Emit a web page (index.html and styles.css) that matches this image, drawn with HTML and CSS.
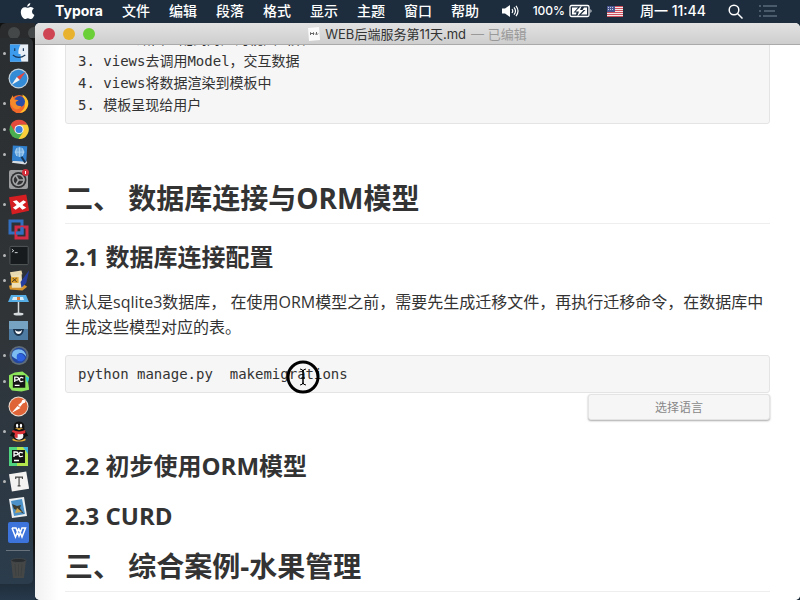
FILE: index.html
```
<!DOCTYPE html>
<html lang="zh-CN">
<head>
    <meta charset="UTF-8">
    <meta name="viewport" content="width=device-width, initial-scale=1.0">
    <title>WEB后端服务第11天.md</title>
    <link rel="stylesheet" href="styles.css">
</head>
<body>
    <header class="menubar">
        <svg class="apple" width="15" height="17" viewBox="0 0 15 17"><path fill="#fff" d="M10.3 0c.2 1.700-1.200 3.600-3.100 3.700C7 2 8.600.2 10.300 0zM7.600 4.800c.7 0 1.700-.9 3.200-.8 1.300.1 2.300.6 3 1.500-2.600 1.700-2.200 5.200.6 6.400-.6 1.700-2 4.100-3.500 4.100-1.200 0-1.600-.8-3-.8s-1.900.8-3 .8C3 16 .8 12.400.8 9.100.8 5.900 2.800 4.200 4.800 4.200c1.300 0 2.200.6 2.800.6z"/></svg>
        <nav class="menus">
            <button class="app-name">Typora</button>
            <button>文件</button>
            <button>编辑</button>
            <button>段落</button>
            <button>格式</button>
            <button>显示</button>
            <button>主题</button>
            <button>窗口</button>
            <button>帮助</button>
        </nav>
        <div class="status">
            <svg class="volume" width="18" height="14" viewBox="0 0 18 14"><path fill="#fff" d="M1 4.500h3L9 1v12L4 9.500H1z"/><path fill="none" stroke="#fff" stroke-width="1.200" d="M11 5q1.500 2 0 4M13 3.300q3 3.700 0 7.400M15 1.800q4 5.200 0 10.400"/></svg>
            <span class="percent">100%</span>
            <svg class="battery" width="24" height="14" viewBox="0 0 24 14"><rect x="1" y="1.500" width="19" height="11" rx="1.500" fill="none" stroke="#fff" stroke-width="1.300"/><path fill="#fff" d="M3 3.500h6L4.500 8.500h3L7 10.500H3zM15 3.500h3v7h-6L16.500 6h-3zM13 1L6.500 7.500H10L8 13l6.500-7H11zM21.500 5q2 2 0 4z"/></svg>
            <svg class="flag" width="16" height="11" viewBox="0 0 16 11"><path fill="#f3e9e9" d="M0 0h16v11H0z"/><path stroke="#cf4f5e" d="M0 .5h16M0 2.500h16M0 4.500h16M0 6.500h16M0 8.500h16M0 10.500h16"/><path fill="#4a568f" d="M0 0h8v6H0z"/><path stroke="#c8cce0" stroke-dasharray="1 1" d="M1 1.500h6M1 3.500h6"/></svg>
            <span class="clock">周一 11:44</span>
            <svg class="search" width="15" height="15" viewBox="0 0 15 15" fill="none" stroke="#fff" stroke-width="1.500"><circle cx="6" cy="6" r="4.800"/><path d="M9.500 9.500l5 5"/></svg>
            <svg class="list" width="19" height="12" viewBox="0 0 19 12" stroke="#596b7c" stroke-width="1.500"><path d="M0 1h2M4 1h14M0 6h2M5 6h11M0 11h2M4 11h14"/></svg>
        </div>
    </header>

    <div class="desktop">
        <aside class="side">
            <div class="back-window"><i></i><i></i></div>
            <div class="dock">
                <ul class="dock-apps">
                    <li class="running"><svg viewBox="0 0 21 21"><path fill="#e7eef5" d="M1 1h19v18H1z"/><path fill="#3d9bee" d="M1 1h11q-3 6-2 10h2q0 4 1 8H1z"/><path fill="none" stroke="#17385c" stroke-width="1.200" d="M6 5v3M15 5v3M4 12q6 5 13 0"/></svg></li>
                    <li><svg viewBox="0 0 21 21"><circle cx="10.500" cy="10.500" r="10" fill="#c4d2dc"/><circle cx="10.500" cy="10.500" r="8.800" fill="#348bd6"/><path fill="#e5453d" d="M17.500 4l-5.700 8-3-3z"/><path fill="#f3f3f3" d="M3.500 17l5.300-8 3 3z"/></svg></li>
                    <li class="running"><svg viewBox="0 0 21 21"><circle cx="10.500" cy="11" r="9.500" fill="#f1682a"/><path fill="#ffc12b" d="M14 1q7 4 6 11-2 8-9 8 7-4 5-10z"/><circle cx="11" cy="8.500" r="5.700" fill="#2b4fa9"/><path fill="#f58a2b" d="M1 7l3-5 1 4 5 1-3 2q0 5 6 4-3 5-7 3Q1 13 1 7z"/></svg></li>
                    <li class="running"><svg viewBox="0 0 21 21"><circle cx="10.500" cy="10.500" r="10" fill="#4aae50"/><path fill="#e24a3c" d="M1.800 5.500a10 10 0 0 1 17.400 0h-8.700L6.200 13z"/><path fill="#fbcf3b" d="M10.500 5.500h8.700a10 10 0 0 1-9.200 15l4.800-7.500z"/><circle cx="10.500" cy="10.500" r="4.800" fill="#f4f4f4"/><circle cx="10.500" cy="10.500" r="3.700" fill="#397fe0"/></svg></li>
                    <li class="running"><svg viewBox="0 0 21 21"><path fill="#d7dde3" d="M3 19l14 2 2-2-1-2H4z"/><path fill="#3181ce" d="M4 1l15 1-1 16-15-1z"/><circle cx="11" cy="8" r="5" fill="#75afe0"/><path fill="none" stroke="#b4d8f5" stroke-width=".8" d="M6 8h10M11 3v10M8 4q-2 4 0 8M14 4q2 4 0 8"/><path stroke="#193452" stroke-width="2" d="M13 13l4 6"/></svg></li>
                    <li><svg viewBox="0 0 21 21"><rect x="1" y="1" width="19" height="19" rx="2" fill="#9c9e9f"/><circle cx="10.500" cy="11" r="8" fill="#303234"/><circle cx="10.500" cy="11" r="5.500" fill="none" stroke="#a4a6a7" stroke-width="1.500"/><path stroke="#a4a6a7" stroke-width="1.500" d="M10.500 11l-3-5M10.500 11h6M10.500 11l-3 5"/><circle cx="17.500" cy="3.500" r="3.500" fill="#d3303d"/><path stroke="#fff" d="M17.500 2v3"/></svg></li>
                    <li class="running"><svg viewBox="0 0 21 21"><path fill="#d51e22" d="M0 3l18-3 3 17-18 4z"/><path fill="#fff" d="M4 7l4-1 3 3 4-3 3 2-4 3 4 3-4 2-3-3-4 3-3-2 4-3z"/></svg></li>
                    <li><svg viewBox="0 0 21 21" fill="none" stroke-width="3"><path stroke="#326fc0" d="M2 2h12v12H2z"/><path stroke="#d22b46" d="M8 8h11v11H8z"/><path stroke="#326fc0" d="M8 14h6V8"/></svg></li>
                    <li class="running"><svg viewBox="0 0 21 21"><rect x="1" y="1" width="19" height="19" rx="1" fill="#171b1e" stroke="#55595b"/><path fill="none" stroke="#ddd" d="M3 4l2 1.500L3 7M6 7.500h3"/></svg></li>
                    <li class="running"><svg viewBox="0 0 21 21"><path fill="#d4932e" d="M0 16l13-3 6 4-5 4-13-1z"/><path fill="#eee1b9" d="M2 3l11-1 1 16H3z"/><path fill="#e8d9b0" d="M1 2l12-2 1 4-12 2z"/><path fill="#e0a22b" d="M2 7h8v6H2z"/><path fill="none" stroke="#4b3722" d="M3 12l5-4M4 8l4 4"/><path fill="#263f9e" d="M21 0l-3 13-5 5-1-6z"/></svg></li>
                    <li><svg viewBox="0 0 21 21"><path fill="#57aee4" d="M3 0h15l3 7H0z"/><path fill="#d8edf7" d="M5 2h10l1 3H4z"/><path fill="#df7d37" d="M9 2h3v3H9z"/><path stroke="#d6dbde" stroke-width="1.500" d="M10.500 7v12"/><ellipse cx="10.500" cy="19" rx="5" ry="1.500" fill="#d6dbde"/></svg></li>
                    <li><svg viewBox="0 0 21 21"><path fill="#4d7ba2" d="M1 1h19v19H1z"/><path fill="#77a3c3" d="M1 1h19v8H1z"/><path fill="#1d344d" d="M5 9h11q-1 7-5.500 7T5 9z"/><path fill="#fff" d="M7 10q3.500 3 7 0-.5 4-3.500 4T7 10z"/></svg></li>
                    <li class="running"><svg viewBox="0 0 21 21"><circle cx="10.500" cy="10.500" r="10" fill="#5e6c79"/><circle cx="10.500" cy="10.500" r="8" fill="#24479f"/><path fill="#7cbcf0" d="M3 11q0-7 7-7 7 0 8 8-3-5-7-4-4 2-2 7-4-2-6-4z"/><path fill="#2c62e0" d="M9 9q5-2 8 4-3 5-8 3-2-4 0-7z"/></svg></li>
                    <li class="running"><svg viewBox="0 0 21 21"><path fill="#8ee65c" d="M0 4l6-3 8-1 4 3 3 3-1 5 1 8-8 2-10-1L0 16z"/><path fill="#29c6dc" d="M17 5l4 2-2 5z"/><path fill="#151515" d="M4 4h13v13H4z"/><g fill="none" stroke="#fff" stroke-width="1.300"><path d="M6 11V6h2q2 0 2 1.500T8 9H6M15 7q-4-2-4 1.500t4 1.500M6 14.500h5"/></g></svg></li>
                    <li><svg viewBox="0 0 21 21"><circle cx="10.500" cy="10.500" r="10" fill="#e9dcd2"/><circle cx="10.500" cy="10.500" r="9" fill="#df6437"/><path fill="#fff" d="M3.500 17l6-7 3 2zM10 9l5-4 1 1-4 5z"/><circle cx="15.500" cy="5.500" r="1.800" fill="#fff"/></svg></li>
                    <li class="running"><svg viewBox="0 0 21 21"><ellipse cx="10.500" cy="19" rx="7" ry="2" fill="#e5ad35"/><path fill="#111" d="M5 8Q4 0 10.500 0T16 8l4 7-3 1q-1 4-6.500 4T4 16l-3-1z"/><ellipse cx="10.500" cy="15" rx="4.500" ry="4" fill="#f4f4f4"/><ellipse cx="8.500" cy="4.500" rx="1.200" ry="2" fill="#fff"/><ellipse cx="12.500" cy="4.500" rx="1.200" ry="2" fill="#fff"/><path fill="#efb236" d="M6 7h9l-4.500 2z"/><path fill="#dc3238" d="M4 9q6.500 3 13 0v3q-4 2-8 1v4H6v-5l-3-1z"/></svg></li>
                    <li><svg viewBox="0 0 21 21"><path fill="#b4e54d" d="M1 1h19v19H1z"/><path fill="#50d480" d="M1 1h8v19H1z"/><path fill="#3cb5df" d="M15 1h5v7z"/><path fill="#151515" d="M4 4h13v13H4z"/><g fill="none" stroke="#fff" stroke-width="1.300"><path d="M6 11V6h2q2 0 2 1.500T8 9H6M15 7q-4-2-4 1.500t4 1.500M6 14.500h5"/></g></svg></li>
                    <li class="running"><svg viewBox="0 0 21 21"><path fill="#f4f3f1" d="M0 3l18-3 3 18-18 3z"/><path fill="none" stroke="#444" stroke-width="1.200" d="M7 8V6h7v2M10.500 6v9M9 15h3"/></svg></li>
                    <li><svg viewBox="0 0 21 21"><path fill="#edf0f1" d="M1 2l15-2 3 19-15 2z"/><path fill="#4c92c8" d="M3 4l11-2 3 15-11 2z"/><path fill="#3b3c32" d="M4 7l5 2 4-1-1 3 4 6-5-3-5-2z"/><path fill="#c8a450" d="M9 11l5 4-7 1z"/></svg></li>
                    <li><svg viewBox="0 0 21 21"><rect x="0" y="0" width="21" height="21" rx="2" fill="#3c74dc"/><path fill="none" stroke="#fff" stroke-width="1.500" d="M4 6h4l3 8 3-8h3.500l-3.500 9-3.500-9M4 6l3.500 9L11 6"/></svg></li>
                </ul>
                <hr>
                <svg class="trash" width="17" height="21" viewBox="0 0 17 21"><path fill="#454747" d="M1 2h15l-2 18H3z"/><ellipse cx="8.500" cy="2.500" rx="7.500" ry="2" fill="#292d2f" stroke="#4c5051" stroke-width=".6"/><path stroke="#3c4040" d="M5 6l1 12M8.500 6v12M12 6l-1 12"/></svg>
            </div>
        </aside>

        <section class="window">
            <div class="titlebar">
                <div class="lights">
                    <button class="close" aria-label="关闭"></button>
                    <button class="minimize" aria-label="最小化"></button>
                    <button class="zoom" aria-label="缩放"></button>
                </div>
                <div class="doc-title">
                    <svg width="12" height="14" viewBox="0 0 12 14"><path fill="#fafafa" d="M0 1l11-1 1 13-11 1z"/><path fill="none" stroke="#666" d="M2.500 8V5.500l1.500 1.500 1.500-1.500V8M8.500 5v2M7 6.500L8.500 8 10 6.500"/></svg>
                    <span>WEB后端服务第11天.md</span>
                    <span class="edited">— 已编辑</span>
                </div>
            </div>
            <main class="editor">
                <pre class="code-block steps">2. urls路由匹配到对应的视图函数views
3. views去调用Model，交互数据
4. views将数据渲染到模板中
5. 模板呈现给用户</pre>
                <h2>二、 数据库连接与ORM模型</h2>
                <h3>2.1 数据库连接配置</h3>
                <p>默认是sqlite3数据库， 在使用ORM模型之前，需要先生成迁移文件，再执行迁移命令，在数据库中生成这些模型对应的表。</p>
                <div class="fence">
                    <pre class="code-block">python manage.py  makemigrations</pre>
                    <input class="lang" type="text" placeholder="选择语言" aria-label="选择语言">
                    <svg class="pointer" width="34" height="34" viewBox="0 0 34 34" fill="none" stroke="#000"><circle cx="17" cy="17" r="15" stroke-width="3"/><path d="M14 9q3 0 3 3v10q0 3-3 3M20 9q-3 0-3 3v10q0 3 3 3M15 18h4"/></svg>
                </div>
                <h3>2.2 初步使用ORM模型</h3>
                <h3>2.3 CURD</h3>
                <h2>三、 综合案例-水果管理</h2>
            </main>
        </section>
    </div>
</body>
</html>
```
FILE: styles.css
```
* {
    box-sizing: border-box;
}
body {
    display: flex;
    flex-direction: column;
    height: 100vh;
    margin: 0;
    overflow: hidden;
    background: #1b2a38;
    font-family: "Open Sans", "Noto Sans CJK SC", sans-serif;
    color: #333;
}
button {
    padding: 0;
    border: 0;
    background: none;
    color: inherit;
    font: inherit;
}

/* 顶部菜单栏 */
.menubar {
    display: flex;
    flex: none;
    align-items: center;
    height: 23px;
    padding: 0 22px 1px 20px;
    background: #1d2d3e;
    color: #fff;
    font: 500 14px/22px Inter, "Noto Sans CJK SC", sans-serif;
}
.apple {
    margin-right: 20px;
}
.menus {
    display: flex;
    gap: 19px;
}
.app-name {
    font-weight: 700;
}
.status {
    display: flex;
    align-items: center;
    margin-left: auto;
}
.percent {
    margin: 0 4px 0 14px;
    font-size: 12px;
}
.flag {
    margin: 0 17px 0 14px;
}
.search {
    margin: 0 16px 0 22px;
}

.desktop {
    display: flex;
    flex: 1;
    min-height: 0;
}

/* 左侧程序坞 */
.side {
    display: flex;
    flex: none;
    flex-direction: column;
    width: 35px;
    padding-bottom: 16px;
    background: linear-gradient(#111 90%, #26394b);
}
.back-window {
    display: flex;
    gap: 8px;
    height: 15px;
    padding: 4px 0 0 8px;
    overflow: hidden;
    border-radius: 6px 0 0 0;
    background: #292b2c;
}
.back-window i {
    flex: none;
    width: 12px;
    height: 12px;
    border-radius: 50%;
    background: #454849;
}
.dock {
    display: flex;
    flex: 1;
    flex-direction: column;
    align-items: center;
    min-height: 0;
    margin-right: 2px;
    padding: 5px 0 5px 3px;
    border-radius: 0 5px 5px 0;
    background: linear-gradient(#2b2e30, #303437 50%, #2b3c4c);
}
.dock-apps {
    display: flex;
    flex: 1;
    flex-direction: column;
    justify-content: space-between;
    width: 30px;
    margin: 0;
    padding: 0;
    list-style: none;
}
.dock-apps li {
    display: flex;
    align-items: center;
    justify-content: flex-end;
    height: 21px;
    padding-right: 4px;
}
.dock-apps svg {
    width: 21px;
    height: 21px;
}
.running::before {
    content: "";
    width: 3px;
    height: 3px;
    margin-right: 3px;
    border-radius: 50%;
    background: #b4b6b7;
}
.dock hr {
    width: 24px;
    margin: 7px 0;
    border: 0;
    border-top: 1px solid #68737d;
}

/* 编辑器窗口 */
.window {
    display: flex;
    flex: 1;
    flex-direction: column;
    min-width: 0;
    overflow: hidden;
    border-radius: 5px;
    background: #fff;
}
.titlebar {
    display: grid;
    flex: none;
    grid-template-columns: 1fr auto 1fr;
    align-items: center;
    height: 22px;
    padding: 0 8px;
    border-bottom: 1px solid #aaa;
    background: linear-gradient(#e2e2e2, #cecece);
}
.lights {
    display: flex;
    gap: 8px;
}
.lights button {
    width: 12px;
    height: 12px;
    border-radius: 50%;
}
.close {
    background: #cf4453;
}
.minimize {
    background: #e8b22f;
}
.zoom {
    background: #6bcf38;
}
.doc-title {
    display: flex;
    align-items: center;
    gap: 5px;
    font: 13px/20px Inter, "Noto Sans CJK SC", sans-serif;
}
.edited {
    color: #999;
}

/* 正文 */
.editor {
    flex: 1;
    padding: 0 30px;
    overflow: hidden;
    background: linear-gradient(to right, #f1f1f1, #fff 24px);
    font-size: 16px;
    line-height: 25px;
}
.code-block {
    margin: 0;
    padding: 7px 12px;
    border: 1px solid #e4e4e4;
    border-radius: 3px;
    background: #f6f6f6;
    font: 14px/22px "DejaVu Sans Mono", "Noto Sans CJK SC", monospace;
}
/* 已滚动过的代码块，只露出后几行 */
.steps {
    margin: -25px 0 57px;
}
h2,
h3 {
    margin: 0 0 16px;
    font-weight: 700;
    line-height: 34px;
}
h2 {
    padding-bottom: 8px;
    border-bottom: 1px solid #eee;
    font-size: 28px;
}
h3 {
    font-size: 24px;
}
p {
    margin: 0 0 15px;
}
.fence {
    position: relative;
    margin-bottom: 56px;
}
.lang {
    position: absolute;
    top: 39px;
    right: 0;
    width: 182px;
    height: 26px;
    border: 1px solid #e4e4e4;
    border-radius: 3px;
    background: #f6f6f6;
    box-shadow: 0 1px 2px #aaa;
    font: 12px/20px "Open Sans", "Noto Sans CJK SC", sans-serif;
    text-align: center;
}
.lang::placeholder {
    color: #888;
}
.pointer {
    position: absolute;
    top: 5px;
    left: 221px;
}
```
